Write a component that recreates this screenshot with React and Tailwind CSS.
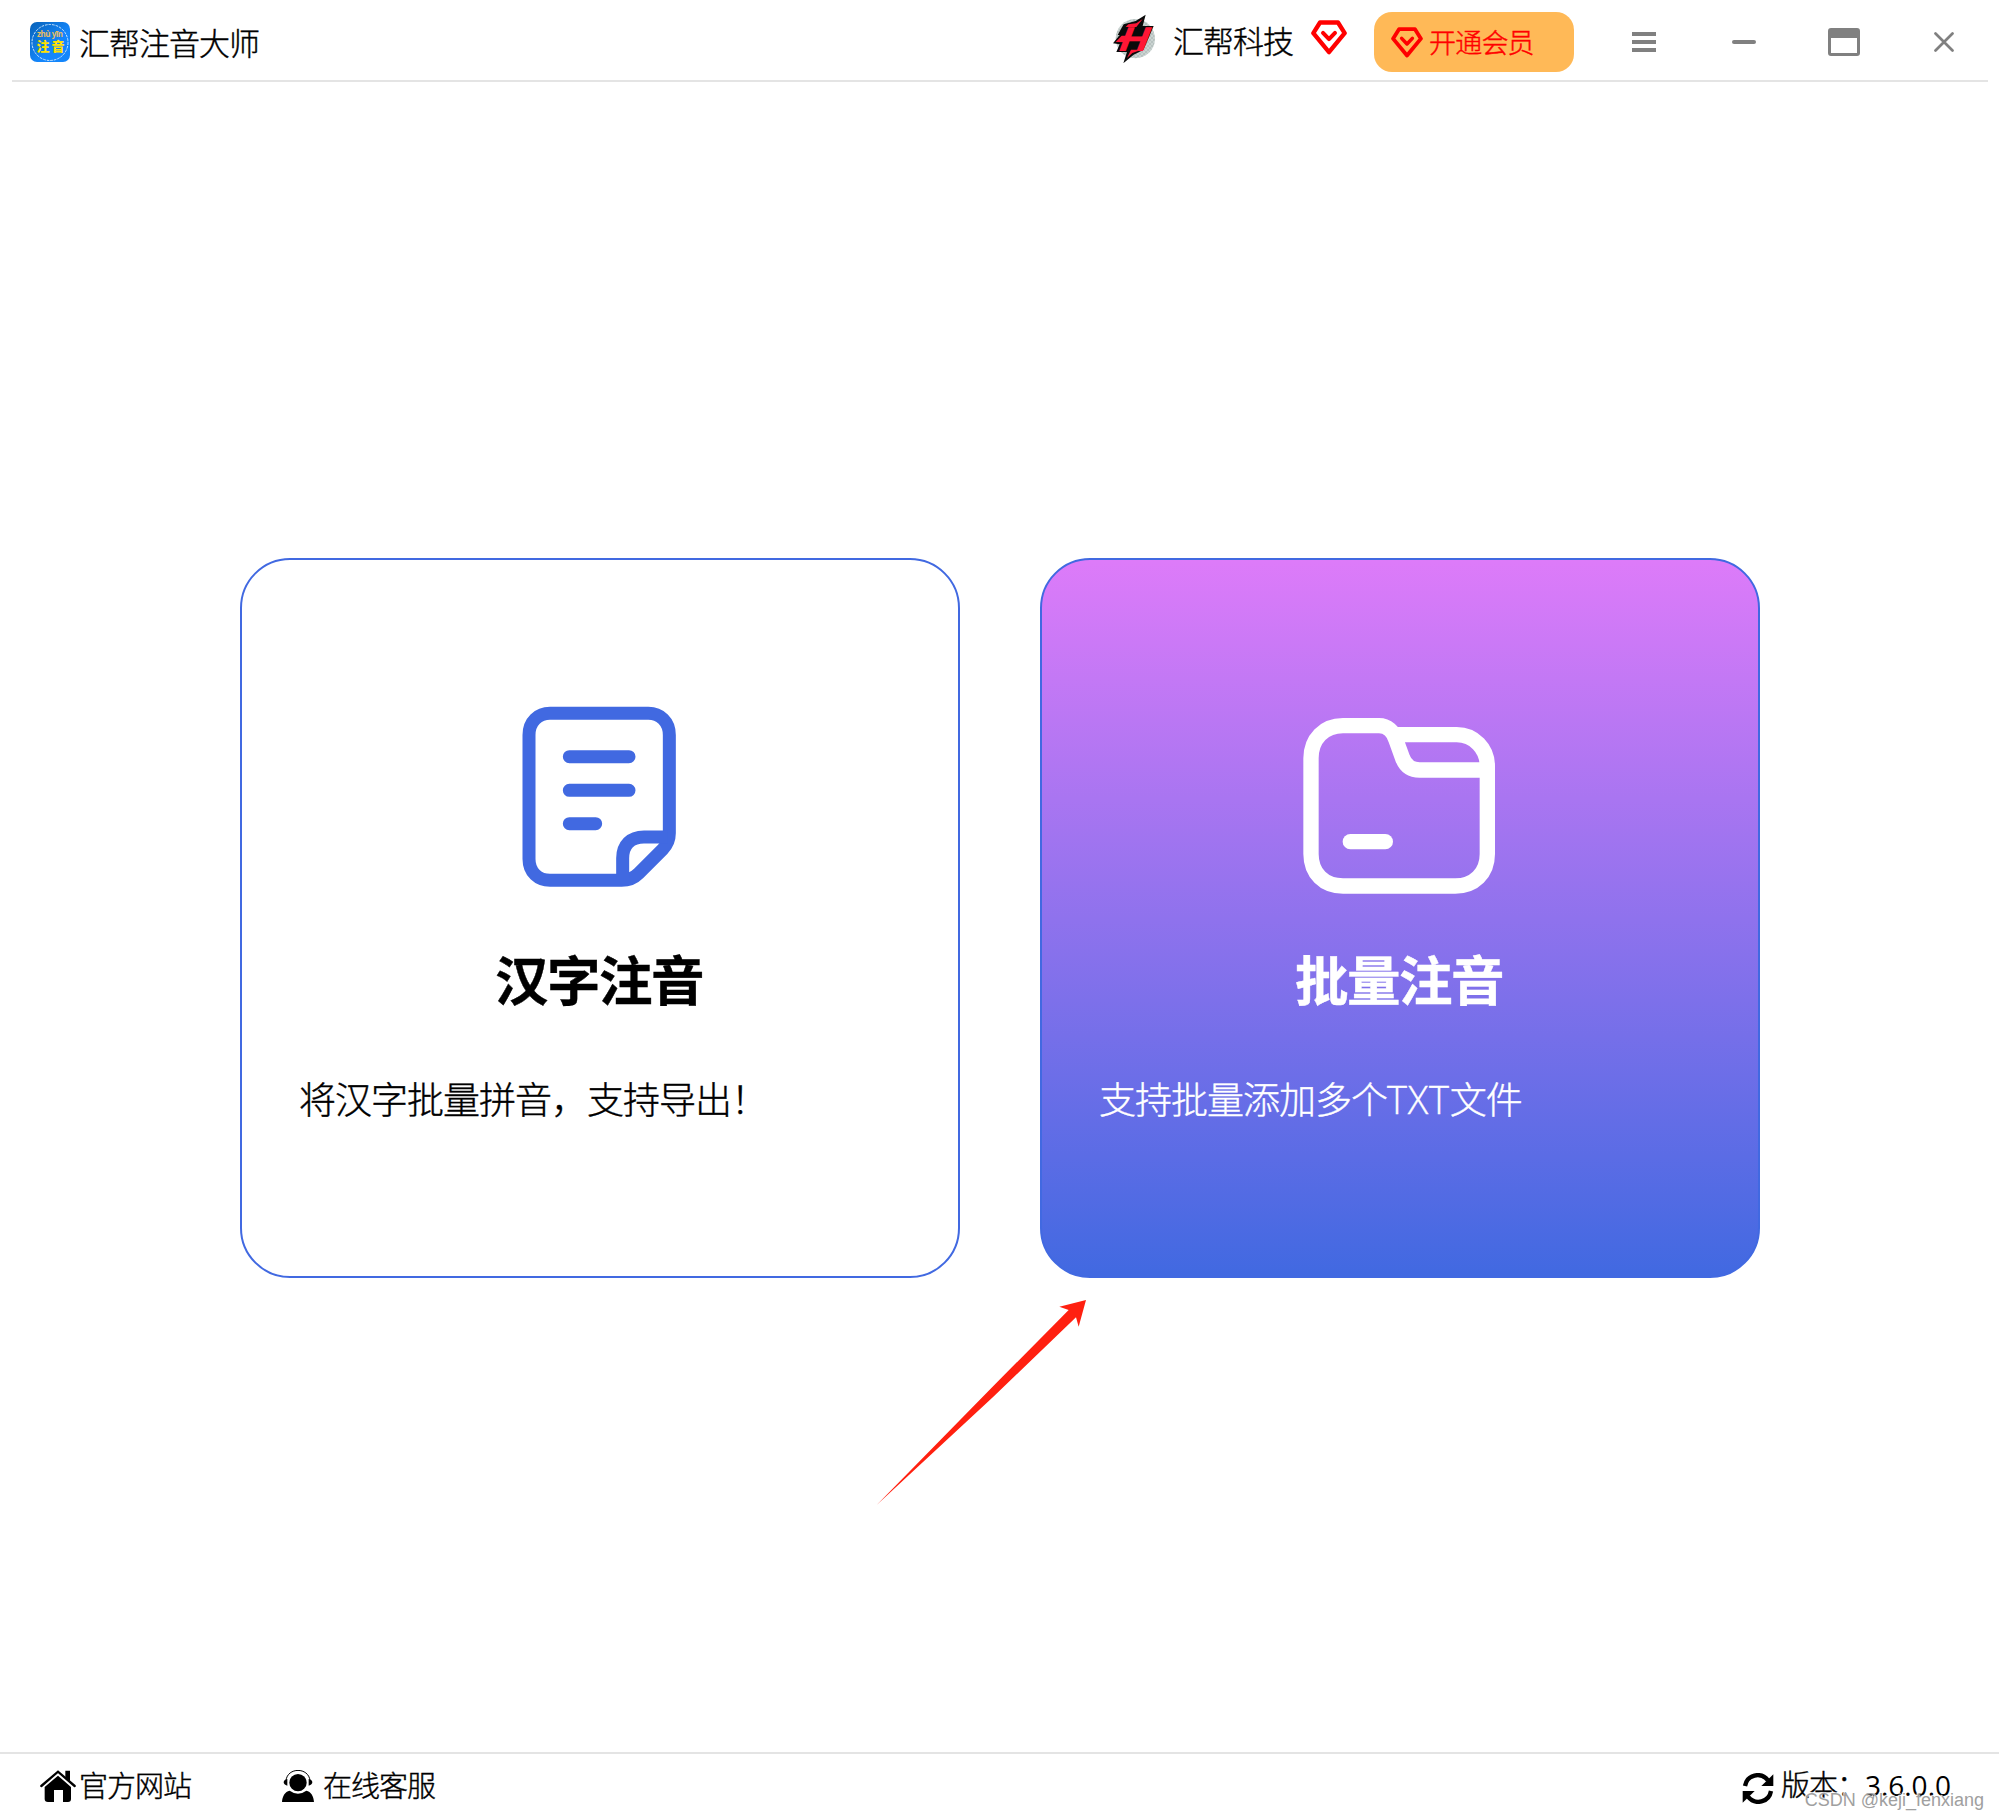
const NAV_LINKS = [
  { label: "官方网站", Icon: HomeIcon, gap: "gap-[3px]" },
  { label: "在线客服", Icon: ServiceIcon, gap: "gap-[9px]" },
];

const WINDOW_BUTTONS = [
  { name: "menu", Icon: MenuIcon },
  { name: "minimize", Icon: MinimizeIcon },
  { name: "maximize", Icon: MaximizeIcon },
  { name: "close", Icon: CloseIcon },
];

function AppLogo() {
  return (
    <svg viewBox="0 0 40 40" className="h-10 w-10 shrink-0">
      <defs>
        <linearGradient id="appLogo" x1="0" y1="0" x2="0.6" y2="0.6">
          <stop offset="0" stopColor="#0862b8" />
          <stop offset="1" stopColor="#1486fb" />
        </linearGradient>
      </defs>
      <rect width="40" height="40" rx="7" fill="url(#appLogo)" />
      <circle cx="20" cy="20.5" r="18" fill="none" stroke="#dcefff" strokeWidth="0.9" strokeDasharray="2.6 1" />
      <text x="20" y="15" textAnchor="middle" fontSize="8" fontWeight="700" textLength="26" fontFamily="Noto Sans, sans-serif" fill="#e9bd62">
        zhù yīn
      </text>
      <text x="20.5" y="28.5" textAnchor="middle" fontSize="13" fontWeight="900" textLength="28" fontFamily="Noto Sans CJK SC, sans-serif" fill="#ffe100">
        注音
      </text>
    </svg>
  );
}

function CompanyLogo() {
  return (
    <svg viewBox="0 0 126 150" className="h-[50px] w-[42px] shrink-0 overflow-visible">
      <defs>
        <pattern id="dots" width="4" height="4" patternUnits="userSpaceOnUse">
          <rect width="4" height="4" fill="#e6ecea" />
          <rect width="2" height="2" fill="#9aa9a6" />
          <rect x="2" y="2" width="2" height="2" fill="#9aa9a6" />
        </pattern>
      </defs>
      <circle cx="67" cy="71" r="59" fill="url(#dots)" />
      <polygon points="98,-1 89,33 122,33 92,104 62,119 31,145 42,111 10,111 20,88 0,85 20,60 14,60 32,28 68,18" fill="#0a0a0a" />
      <polygon points="89,12 70,36 38,36 46,28 70,25" fill="#ff1635" />
      <polygon points="42,129 54,104 86,104 58,114" fill="#ff1635" />
      <polygon points="8,81 26,62 50,62 44,82" fill="#ff1635" />
      <g transform="translate(12 107) skewX(-21)">
        <text
          fontSize="98"
          fontWeight="800"
          textLength="84"
          lengthAdjust="spacingAndGlyphs"
          fontFamily="Inter, Liberation Sans, sans-serif"
          fill="#ff1635"
        >
          H
        </text>
      </g>
    </svg>
  );
}

function VipIcon({ className }) {
  return (
    <svg viewBox="0 0 108 104" className={className} fill="none" stroke="#ff0000" strokeLinejoin="round" strokeLinecap="round">
      <path d="M27 7 H81 L101 39 L54 96 L7 39 Z" strokeWidth="13" />
      <path d="M36 38 L54 57 L72 38" strokeWidth="12" />
    </svg>
  );
}

function MenuIcon() {
  return (
    <svg viewBox="0 0 24 20" className="h-5 w-6" fill="#808080">
      <rect width="24" height="4" />
      <rect y="8" width="24" height="4" />
      <rect y="16" width="24" height="4" />
    </svg>
  );
}

function MinimizeIcon() {
  return (
    <svg viewBox="0 0 24 4" className="h-1 w-6" fill="#808080">
      <rect width="24" height="4" rx="2" />
    </svg>
  );
}

function MaximizeIcon() {
  return (
    <svg viewBox="0 0 32 28" className="h-7 w-8" fill="#808080">
      <path fillRule="evenodd" d="M3 0H29a3 3 0 0 1 3 3V25a3 3 0 0 1-3 3H3a3 3 0 0 1-3-3V3a3 3 0 0 1 3-3ZM3 10V25H29V10Z" />
    </svg>
  );
}

function CloseIcon() {
  return (
    <svg viewBox="0 0 20 20" className="h-5 w-5" stroke="#808080" strokeWidth="2.7" strokeLinecap="round">
      <path d="M1.5 1.5 18.5 18.5M18.5 1.5 1.5 18.5" />
    </svg>
  );
}

function DocumentIcon() {
  return (
    <svg viewBox="0 0 720 720" className="h-60 w-60" fill="none" stroke="#4169e1" strokeWidth="39" strokeLinejoin="round">
      <path d="M568 165 C568 125 540 100 505 100 H210 C175 100 147 125 147 165 V537 C147 577 175 601 210 601 H425 C446 601 462 594 476 580 L548 508 C561 495 568 480 568 460 Z" />
      <path d="M428 596 V535 C428 495 452 471 492 471 H562" />
      <path d="M268 230 H447 M268 331 H447 M268 431 H347" strokeLinecap="round" />
    </svg>
  );
}

function FolderIcon() {
  return (
    <svg viewBox="30 -30 720 720" className="h-60 w-60" fill="none" stroke="#ffffff" strokeWidth="46" strokeLinejoin="round">
      <path d="M376 134 H560 C612 134 652 176 652 228 V492 C652 550 612 588 556 588 H219 C162 588 123 550 123 492 V205 C123 147 162 107 219 107 H327 C352 107 370 124 378 150 L398 205 C407 228 423 240 449 240 H645" />
      <path d="M241 455 H346" strokeLinecap="round" />
    </svg>
  );
}

function HomeIcon() {
  return (
    <svg viewBox="0 0 108 96" className="h-8 w-9 shrink-0" fill="#000000">
      <path d="M76 2H90V34L76 22Z" />
      <path d="M4 48 L54 5 L104 48" fill="none" stroke="#000000" strokeWidth="7" strokeLinecap="round" />
      <path d="M54 17 L93 51 V87 Q93 96 84 96 H69 V60 H42 V96 H24 Q14 96 14 87 V51 Z" />
    </svg>
  );
}

function ServiceIcon() {
  return (
    <svg viewBox="0 0 96 96" className="ml-0.5 h-8 w-8 shrink-0" fill="#000000">
      <path d="M12 32 C16 -9 80 -9 84 32" fill="none" stroke="#000000" strokeWidth="3" />
      <circle cx="48" cy="38" r="26" />
      <path d="M16 27 V47 Q5 44 5 37 T16 27ZM80 27 V47 Q91 44 91 37 T80 27Z" />
      <path d="M0 96 C1 78 9 65 23 62 Q48 80 73 62 C87 65 95 78 96 96Z" />
    </svg>
  );
}

function RefreshIcon() {
  return (
    <svg viewBox="0 0 96 93" className="mt-[6px] h-[31px] w-8 shrink-0">
      <path d="M9 39 C15 5 56 -5 78 22" fill="none" stroke="#000000" strokeWidth="13" />
      <path d="M94 4 V39 H58Z" />
      <path d="M87 54 C81 88 40 98 18 71" fill="none" stroke="#000000" strokeWidth="13" />
      <path d="M2 89 V54 H38Z" />
    </svg>
  );
}

function FeatureCard({ Icon, title, children, className }) {
  return (
    <div className={`flex h-[720px] w-[720px] flex-col items-center rounded-[50px] border-2 border-[#4169e1] pt-[120px] ${className}`}>
      <Icon />
      <h2 className="mt-7 mr-0.5 text-[53.5px] leading-[60px] font-bold tracking-[-1.5px]">{title}</h2>
      <p className="mt-[70px] w-full px-[57px] text-[37px] leading-[40px] tracking-[-1px]">{children}</p>
    </div>
  );
}

export default function App() {
  return (
    <div className="relative flex h-[1819px] w-[1999px] flex-col overflow-hidden bg-white font-['Noto_Sans_CJK_SC',sans-serif] font-light text-black [-webkit-text-stroke:0.4px_currentColor]">
      {/* Title bar */}
      <header className="mr-[11px] ml-3 flex h-[82px] shrink-0 border-b-2 border-[#e4e4e4]">
        <div className="flex h-[84px] items-center pl-[18px]">
          <AppLogo />
          <span className="ml-[9px] text-[31px] leading-10 tracking-[-1px]">汇帮注音大师</span>
        </div>
        <div className="-mr-1.5 ml-auto flex h-[84px] items-center">
          <div className="mb-1 flex items-center">
            <CompanyLogo />
            <span className="ml-[18px] text-[31px] leading-10 tracking-[-1px]">汇帮科技</span>
            <VipIcon className="mb-1.5 ml-[18px] h-[35px] w-9" />
          </div>
          <button className="ml-[27px] flex h-[60px] w-[200px] items-center rounded-[18px] bg-[#ffb957] pl-[17px] text-[27px] text-[#ff0000]">
            <VipIcon className="h-[31px] w-8" />
            <span className="ml-1.5 tracking-[-0.8px]">开通会员</span>
          </button>
          <div className="ml-5 flex">
            {WINDOW_BUTTONS.map(({ name, Icon }) => (
              <button key={name} aria-label={name} className="flex w-[100px] items-center justify-center">
                <Icon />
              </button>
            ))}
          </div>
        </div>
      </header>

      <main className="flex grow justify-center gap-20 pt-[476px] pr-0 pl-px">
        <FeatureCard Icon={DocumentIcon} title="汉字注音" className="bg-white">
          将汉字批量拼音，支持导出！
        </FeatureCard>
        <FeatureCard Icon={FolderIcon} title="批量注音" className="bg-linear-to-b/srgb from-[#dd7bf9] to-[#4169e1] text-white">
          支持批量添加多个<span className="font-['Open_Sans',sans-serif] text-[38px] tracking-[0.8px]">TXT</span>文件
        </FeatureCard>
      </main>

      {/* Status bar */}
      <footer className="flex h-[67px] shrink-0 items-center border-t-2 border-[#e4e4e4] pb-0.5 pl-10 text-[29px] leading-10 tracking-[-1px]">
        {NAV_LINKS.map(({ label, Icon, gap }) => (
          <a key={label} className={`flex w-60 items-center ${gap}`}>
            <Icon />
            <span className="-mt-1">{label}</span>
          </a>
        ))}
        <div className="mr-[48px] ml-auto flex items-center gap-[7px]">
          <RefreshIcon />
          <span className="-mt-1">
            版本：<span className="font-['Open_Sans',sans-serif] text-[28px] font-normal tracking-normal [-webkit-text-stroke:0]">3.6.0.0</span>
          </span>
        </div>
      </footer>

      {/* Pointer towards the batch card */}
      <svg viewBox="0 0 780 720" className="absolute top-[1280px] left-[860px] h-[240px] w-[260px]" fill="#ff2010">
        <polygon points="678,60 598,80 626,90 400,318 50,675 400,350 648,112 656,140" />
      </svg>

      <span className="absolute right-[15px] bottom-[7px] font-['Liberation_Sans',sans-serif] text-[18px] leading-6 font-normal whitespace-nowrap text-[#a0a0a0] [text-shadow:-1px_-1px_1px_#ffffff] [-webkit-text-stroke:0]">
        CSDN @keji_fenxiang
      </span>
    </div>
  );
}
